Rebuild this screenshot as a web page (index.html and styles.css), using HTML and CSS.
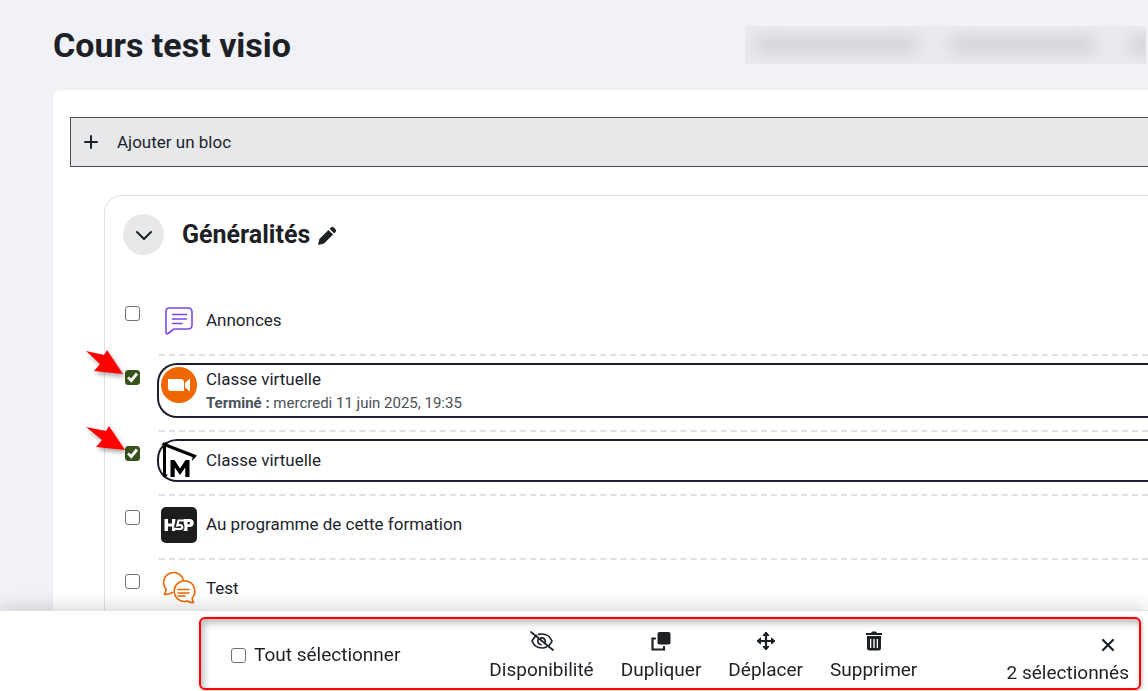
FILE: index.html
```html
<!DOCTYPE html>
<html lang="fr">
<head>
<meta charset="utf-8">
<title>Cours test visio</title>
<link rel="stylesheet" href="styles.css">
</head>
<body>
<header class="page-header">
  <h1 class="page-title">Cours test visio</h1>
  <div class="breadcrumb-blur" aria-hidden="true"><span class="smudge smudge-long"></span><span class="smudge smudge-mid"></span><span class="smudge smudge-short"></span></div>
</header>
<main class="course">
  <button class="add-block" type="button">
    <svg class="icon-plus" viewBox="0 0 16 16"><path d="M8 2v12M2 8h12"/></svg>
    <span>Ajouter un bloc</span>
  </button>
  <section class="section">
    <div class="section-head">
      <button class="toggle" type="button" aria-label="Replier Généralités"><svg viewBox="0 0 18 18"><path d="M2 6l7 7 7-7"/></svg></button>
      <h2 class="section-title">Généralités</h2>
      <button class="edit" type="button" aria-label="Modifier"><svg viewBox="0 0 20 20"><path d="M1 20l1.400-6L11.500 4.900l4.600 4.600L7 18.600zM12.600 3.800l1.300-1.300a2 2 0 0 1 2.800 0l1.800 1.800a2 2 0 0 1 0 2.800l-1.300 1.300z"/></svg></button>
    </div>
    <ul class="activities">
      <li class="activity">
        <input class="check" type="checkbox" aria-label="Sélectionner Annonces">
        <div class="card">
          <svg class="act-icon" viewBox="0 0 36 36"><path class="line-purple" d="M8.500 5H27q4 0 4 4v13q0 4-4 4H13l-6 4.500q-2 1-2-1.500V8.500Q5 5 8.500 5zM11.500 11.500h14M11.500 16h14M11.500 20.500h9.500"/></svg>
          <div class="act-text"><a class="act-name" href="#">Annonces</a></div>
        </div>
      </li>
      <li class="activity">
        <input class="check" type="checkbox" checked aria-label="Sélectionner Classe virtuelle">
        <svg class="arrow" viewBox="0 0 48 36"><path d="M4 4l18 4 3-5 16 24-29-3 6-7z"/></svg>
        <div class="card selected">
          <svg class="act-icon" viewBox="0 0 36 36"><circle cx="18" cy="18" r="18" fill="#ee6700"/><path fill="#fff" d="M7 12h12.500q3.500 0 3.500 3.500V24H10.500Q7 24 7 20.500zM24 16l5-4.500v13L24 20.500z"/></svg>
          <div class="act-text with-date"><a class="act-name" href="#">Classe virtuelle</a><span class="act-date"><strong>Terminé :</strong> mercredi 11 juin 2025, 19:35</span></div>
        </div>
      </li>
      <li class="activity">
        <input class="check" type="checkbox" checked aria-label="Sélectionner Classe virtuelle">
        <svg class="arrow" viewBox="0 0 48 36"><path d="M4 4l20 4 3-5 16 24-29-3 6-7z"/></svg>
        <div class="card selected">
          <svg class="act-icon" viewBox="0 0 36 36"><path fill="none" stroke="#000" stroke-width="3" d="M3.500 34V1.500L33 13"/><path d="M0 1l6-2v5zM36 12.500l-5 5.500 1-7zM.5 31.500h6.500L4 35z"/><path d="M9.500 34V17h4l5.500 8.500 5.500-8.500h4v17h-4.200V24.500L19 32l-5.300-7.500V34z"/></svg>
          <div class="act-text"><a class="act-name" href="#">Classe virtuelle</a></div>
        </div>
      </li>
      <li class="activity">
        <input class="check" type="checkbox" aria-label="Sélectionner Au programme de cette formation">
        <div class="card">
          <svg class="act-icon" viewBox="0 0 36 36"><rect width="36" height="36" rx="5" fill="#1d1d1d"/><path fill="#fff" d="M3.500 12h3.500v4.500h4V12h3.500v12H11v-4.500H7V24H3.500zM22.500 12h6q4.200 0 4.200 4T28.500 20h-2v4h-4zM26.500 15v2.300h1.300q1.300 0 1.300-1.150T27.800 15z"/><path fill="none" stroke="#1d1d1d" stroke-width="5" d="M22.500 14.500H17l-1 3.800q5-1 5 1.700t-6.500 2"/><path fill="none" stroke="#fff" stroke-width="2.200" d="M24 13.500h-6.500l-1.200 5q5-1.300 5 1.700T13 21.500"/></svg>
          <div class="act-text"><a class="act-name" href="#">Au programme de cette formation</a></div>
        </div>
      </li>
      <li class="activity">
        <input class="check" type="checkbox" aria-label="Sélectionner Test">
        <div class="card">
          <svg class="act-icon" viewBox="0 0 36 36"><path class="line-orange" d="M22.500 10A10 10 0 1 0 5 18Q5 21 3.500 23.500 8 23.500 11.500 21.500M31.200 27A10.300 10.300 0 1 0 26.500 30Q29.500 32 32.500 31.500 31 29 31.200 27zM17 18.500h11M17 22h11M17 25h7"/></svg>
          <div class="act-text"><a class="act-name" href="#">Test</a></div>
        </div>
      </li>
    </ul>
  </section>
</main>
<footer class="bulk-bar">
  <div class="select-all"><input class="check" type="checkbox" id="all"><label for="all">Tout sélectionner</label></div>
  <div class="actions">
    <button class="action" type="button"><svg viewBox="0 0 24 20"><path class="stroke" d="M1 1l22 18M6.500 4.500Q3.500 6.500 2 10q3 7 10 7 2.500 0 4.500-1M8.500 3.300Q10 3 12 3q7 0 10 7-.8 2.200-2.500 3.900M8 8.500q-1 4 3 5.300M10.500 7.200q2-1 4 .8 1.500 2 .5 3.500"/></svg><span>Disponibilité</span></button>
    <button class="action" type="button"><svg viewBox="0 0 24 20"><rect x="8.500" y="1" width="13" height="12.500" rx="2"/><path class="stroke thick" d="M6 7.500H3.500V18.500H15V16"/></svg><span>Dupliquer</span></button>
    <button class="action" type="button"><svg viewBox="0 0 24 20"><path class="stroke thick" d="M12 3v14M5 10h14"/><path stroke="#1d2125" stroke-linejoin="round" d="M12 1l3 3.500H9zM12 19l3-3.500H9zM3 10l3.500-3v6zM21 10l-3.500-3v6z"/></svg><span>Déplacer</span></button>
    <button class="action" type="button"><svg viewBox="0 0 24 20"><path d="M4 2h5l1-1.500h4L15 2h5v2H4z"/><path fill-rule="evenodd" d="M5 5h14v12q0 2.500-2.500 2.500h-9Q5 19.500 5 17zM8 8v9h1.300V8zM11.300 8v9h1.400V8zM14.700 8v9H16V8z"/></svg><span>Supprimer</span></button>
  </div>
  <div class="selection">
    <button class="close" type="button" aria-label="Fermer"><svg viewBox="0 0 14 14"><path d="M2 2l10 10M12 2L2 12"/></svg></button>
    <span>2 sélectionnés</span>
  </div>
  <div class="highlight" aria-hidden="true"></div>
</footer>
</body>
</html>
```
FILE: styles.css
```css
* { box-sizing: border-box; }
body { display: flex; flex-direction: column; margin: 0; height: 100vh; overflow: hidden; background: #f1f2f7; color: #1d2125; font: 16px/24px Roboto, sans-serif; }
button { border: 0; padding: 0; background: none; color: inherit; font: inherit; cursor: pointer; }
a { color: inherit; text-decoration: none; }
svg { display: block; flex: none; overflow: visible; }

.page-header { display: flex; flex: none; justify-content: space-between; align-items: center; height: 90px; padding: 0 2px 0 53px; }
.page-title { margin: 0; font-size: 34px; line-height: 40px; font-weight: 700; }
.breadcrumb-blur { display: flex; align-items: center; gap: 30px; width: 401px; height: 38px; padding-left: 8px; overflow: hidden; background: #ebecef; }
.smudge { flex: none; height: 16px; border-radius: 6px; background: #cdced3; filter: blur(9px); }
.smudge-long { width: 166px; }
.smudge-mid { width: 148px; }
.smudge-short { width: 60px; }

.course { display: flex; flex-direction: column; flex: 1; min-height: 0; margin-left: 53px; padding: 27px 0 0 17px; border-top-left-radius: 8px; background: #fff; }
.add-block { display: flex; flex: none; align-items: center; gap: 18px; height: 50px; padding-left: 12px; border: 1px solid #494c57; border-right: 0; background: #e7e8ea; color: #1d1f2d; font-size: 17px; text-align: left; }
.icon-plus { width: 16px; height: 16px; }
.icon-plus path { fill: none; stroke: #1d1f2d; stroke-width: 2; stroke-linecap: round; }

.section { flex: 1; margin: 28px 0 0 34px; padding: 18px 0 0 18px; border: 1px solid #dee2e6; border-right: 0; border-top-left-radius: 18px; }
.section-head { display: flex; align-items: center; }
.toggle { display: grid; place-items: center; width: 41px; height: 41px; border-radius: 50%; background: #e7e8ea; }
.toggle svg { width: 18px; height: 18px; }
.toggle path { fill: none; stroke: #1d1f2d; stroke-width: 2; stroke-linecap: round; stroke-linejoin: round; }
.section-title { margin: 0 7px 0 18px; font-size: 25px; line-height: 30px; font-weight: 700; }
.edit svg { width: 20px; height: 20px; fill: #1d2125; }

.activities { list-style: none; margin: 37px 0 0; padding: 0 0 0 36px; }
.activity { position: relative; padding: 7px 0 12px; border-bottom: 2px dashed #dee2e6; }
.activity:last-child { border-bottom: 0; }
.check { appearance: none; display: grid; flex: none; width: 15px; height: 15px; margin: 0; border: 1px solid #6f7175; border-radius: 3px; background: #fff; }
.check:checked { border-color: #37521a; background: #37521a; }
.check:checked::after { content: ""; background: #fff; clip-path: polygon(8% 56%, 23% 42%, 39% 58%, 76% 12%, 93% 26%, 41% 90%); }
.activity .check { position: absolute; left: -34px; top: 14px; }
.arrow { position: absolute; left: -77px; top: -9px; width: 48px; height: 36px; fill: #f00; filter: drop-shadow(2px 3px 2px #0005); }
.card { display: flex; align-items: flex-start; gap: 9px; margin-left: -2px; padding: 2px 2px 1px; min-height: 43px; border: 2px solid transparent; border-right: 0; border-radius: 20px 0 0 20px; color: #1d1f2d; }
.card.selected { border-color: #1d1f2d; }
.act-icon { width: 36px; height: 36px; }
.act-text { display: flex; flex-direction: column; padding-top: 5px; }
.act-text.with-date { padding: 0 0 1px; }
.act-name { font-size: 17px; line-height: 25px; }
.act-date { color: #495057; font-size: 15px; line-height: 22px; }
.act-date strong { font-weight: 700; }
.line-purple, .line-orange { fill: none; stroke-width: 1.600; stroke-linecap: round; stroke-linejoin: round; stroke: #7f46f0; }
.line-orange { stroke: #ee6700; }

.bulk-bar { position: fixed; left: 0; right: 0; bottom: 0; display: flex; align-items: center; height: 81px; padding: 8px 19px 0 231px; border-top: 1px solid #dee2e6; background: #fff; box-shadow: 0 0 20px #0003; font-size: 19px; line-height: 28px; }
.select-all { display: flex; align-items: center; gap: 8px; }
.actions { display: flex; gap: 27px; margin-left: 89px; padding-top: 4px; }
.action { display: flex; flex-direction: column; align-items: center; gap: 5px; }
.action svg { width: 24px; height: 20px; fill: #1d2125; }
.action .stroke { fill: none; stroke: #1d2125; stroke-width: 1.700; stroke-linecap: round; }
.action .thick { stroke-width: 2.200; }
.selection { display: flex; flex-direction: column; align-items: flex-end; gap: 7px; margin-left: auto; padding-top: 14px; }
.close { padding-right: 14px; }
.close svg { width: 14px; height: 14px; }
.close path { fill: none; stroke: #1d2125; stroke-width: 2.200; stroke-linecap: round; }
.highlight { position: absolute; inset: 6px 7px 1px 199px; border: 2px solid #f00; border-radius: 6px; box-shadow: 1px 1px 4px #0004, inset 3px 4px 7px #0004; pointer-events: none; }
```
